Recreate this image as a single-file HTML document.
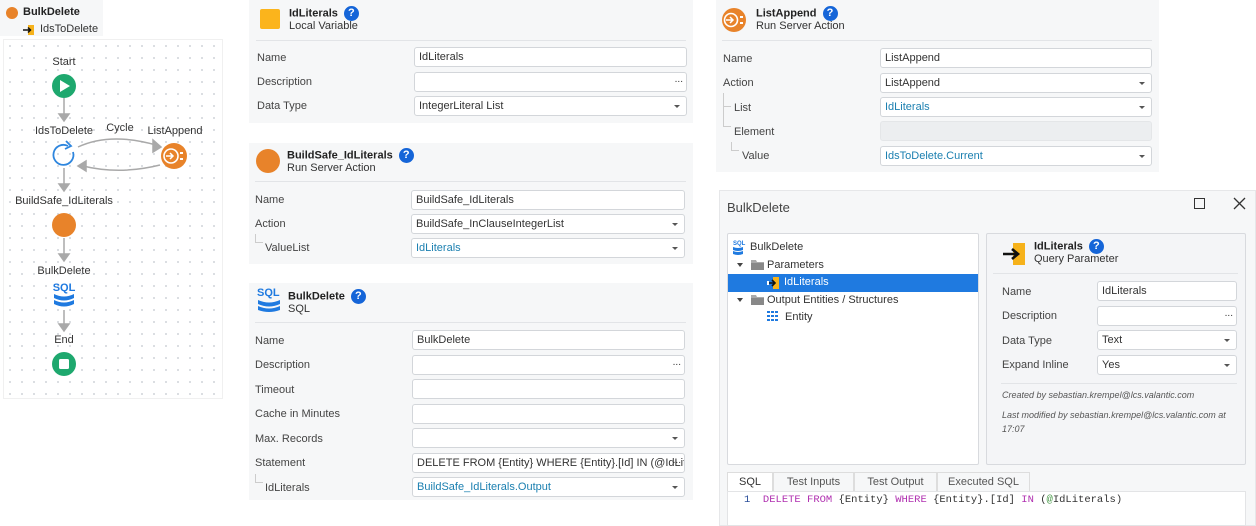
<!DOCTYPE html>
<html><head><meta charset="utf-8"><style>
*{box-sizing:border-box;margin:0;padding:0}
body{width:1256px;height:526px;background:#fff;font-family:"Liberation Sans",sans-serif;font-size:11px;color:#333;position:relative;overflow:hidden}
.a{position:absolute}
.p{position:absolute;background:#f6f7f8}
.t{font-weight:bold;color:#222;font-size:11px}
.s{color:#333;font-size:11px}
.q{display:inline-block;width:15px;height:15px;border-radius:50%;background:#1565d8;color:#fff;font-weight:bold;font-size:11px;text-align:center;line-height:15px;vertical-align:middle;margin-left:6px}
.sep{position:absolute;height:1px;background:#e2e4e7}
.l{position:absolute;color:#444;font-size:11px;margin-top:1px}
.i{position:absolute;height:20px;background:#fff;border:1px solid #d3d6da;border-radius:3px;padding:0 4px;line-height:18px;font-size:11px;color:#333;white-space:nowrap;overflow:hidden}
.i.b{color:#1a7fb0}
.i.dd::after{content:"";position:absolute;right:6px;top:8px;border:3px solid transparent;border-top:3px solid #555}
.i.el::after{content:"...";position:absolute;right:3px;top:-2px;font-size:10px;color:#333}
.tr{position:absolute;border-left:1px solid #ccc;border-bottom:1px solid #ccc;width:8px;height:9px}
.cv{background-color:#fff;background-image:radial-gradient(#cfd3d8 0.8px,transparent 1px);background-size:12px 12px}
.fl{position:absolute;font-size:11px;color:#333;text-align:center;width:140px}
.mono{font-family:"Liberation Mono",monospace;font-size:10.5px}
</style></head><body>

<div class="a" style="left:0;top:0;width:103px;height:36px;background:#f6f7f8"></div>
<div class="a" style="left:6px;top:7px;width:12px;height:12px;border-radius:50%;background:#e8832a"></div>
<div class="a t" style="left:23px;top:6px">BulkDelete</div>
<div class="a" style="left:23px;top:24px;width:11px;height:11px"><svg width="12" height="12"><rect x="5" y="1" width="6" height="10" fill="#f6b21b"/><path d="M0 6H7M5 3.5L7.5 6L5 8.5" stroke="#111" stroke-width="1.5" fill="none"/></svg></div>
<div class="a s" style="left:40px;top:23px">IdsToDelete</div>
<div class="a cv" style="left:3px;top:39px;width:220px;height:360px;border:1px solid #f0f0f0"></div>
<svg class="a" style="left:0;top:0" width="230" height="400">
<g stroke="#a9a9a9" stroke-width="1.5" fill="#a9a9a9">
<line x1="64" y1="98" x2="64" y2="115"/><path d="M59 114L64 121L69 114Z"/>
<line x1="64" y1="168" x2="64" y2="185"/><path d="M59 184L64 191L69 184Z"/>
<line x1="64" y1="238" x2="64" y2="255"/><path d="M59 254L64 261L69 254Z"/>
<line x1="64" y1="310" x2="64" y2="325"/><path d="M59 324L64 331L69 324Z"/>
<path d="M78 147Q110 132 156 145" fill="none"/><path d="M153 140L161 147L153 152Z"/>
<path d="M160 165Q120 175 83 166" fill="none"/><path d="M86 161L78 166L86 171Z"/>
</g>
<circle cx="64" cy="86" r="12" fill="#1ea86e"/><path d="M60 80L70 86L60 92Z" fill="#fff"/>
<path d="M73 152A10 10 0 1 1 68 146" stroke="#2e86de" stroke-width="1.8" fill="none"/><path d="M66 141L71 146L65 149" stroke="#2e86de" stroke-width="1.8" fill="none"/>
<circle cx="174" cy="156" r="13" fill="#e8832a"/><circle cx="171" cy="156" r="7" stroke="#fff" stroke-width="1.6" fill="none"/><path d="M166 156H173M170 153L173 156L170 159" stroke="#fff" stroke-width="1.5" fill="none"/><rect x="180" y="152" width="3" height="2" fill="#fff"/><rect x="180" y="158" width="3" height="2" fill="#fff"/>
<circle cx="64" cy="225" r="12" fill="#e8832a"/>
<text x="64" y="291" font-family="Liberation Sans" font-size="11" font-weight="bold" fill="#1f7ae0" text-anchor="middle">SQL</text>
<path d="M54 294Q64 299 74 294V298Q64 303 54 298Z M54 300Q64 305 74 300V304Q64 309 54 304Z" fill="#1f7ae0"/>
<circle cx="64" cy="364" r="12" fill="#1ea86e"/><rect x="59" y="359" width="10" height="10" rx="1.5" fill="#fff"/>
</svg>
<div class="fl" style="left:-6px;top:56px">Start</div>
<div class="fl" style="left:-6px;top:125px">IdsToDelete</div>
<div class="fl" style="left:50px;top:122px">Cycle</div>
<div class="fl" style="left:105px;top:125px">ListAppend</div>
<div class="fl" style="left:-6px;top:195px">BuildSafe_IdLiterals</div>
<div class="fl" style="left:-6px;top:265px">BulkDelete</div>
<div class="fl" style="left:-6px;top:334px">End</div>

<div class="p" style="left:249px;top:0;width:444px;height:123px"></div>
<div class="a" style="left:260px;top:9px;width:20px;height:20px;background:#fbb41c;border-radius:2px"></div>
<div class="a t" style="left:289px;top:6px">IdLiterals<span class="q">?</span></div>
<div class="a s" style="left:289px;top:20px">Local Variable</div>
<div class="sep" style="left:256px;top:40px;width:430px"></div>
<div class="l" style="left:257px;top:51px">Name</div><div class="i" style="left:414px;top:47px;width:273px">IdLiterals</div>
<div class="l" style="left:257px;top:75px">Description</div><div class="i el" style="left:414px;top:72px;width:273px"></div>
<div class="l" style="left:257px;top:99px">Data Type</div><div class="i dd" style="left:414px;top:96px;width:273px">IntegerLiteral List</div>

<div class="p" style="left:249px;top:143px;width:444px;height:121px"></div>
<div class="a" style="left:256px;top:149px;width:24px;height:24px;border-radius:50%;background:#e8832a"></div>
<div class="a t" style="left:287px;top:148px">BuildSafe_IdLiterals<span class="q">?</span></div>
<div class="a s" style="left:287px;top:162px">Run Server Action</div>
<div class="sep" style="left:255px;top:181px;width:431px"></div>
<div class="l" style="left:255px;top:193px">Name</div><div class="i" style="left:411px;top:190px;width:274px">BuildSafe_IdLiterals</div>
<div class="l" style="left:255px;top:217px">Action</div><div class="i dd" style="left:411px;top:214px;width:274px">BuildSafe_InClauseIntegerList</div>
<div class="tr" style="left:255px;top:234px"></div>
<div class="l" style="left:265px;top:241px">ValueList</div><div class="i dd b" style="left:411px;top:238px;width:274px">IdLiterals</div>

<div class="p" style="left:249px;top:283px;width:444px;height:217px"></div>
<div class="a" style="left:257px;top:287px;font-weight:bold;color:#1f7ae0;font-size:11px">SQL</div>
<svg class="a" style="left:257px;top:300px" width="24" height="12"><path d="M1 0Q12 5 23 0V4Q12 9 1 4Z M1 6Q12 11 23 6V10Q12 14 1 10Z" fill="#1f7ae0"/></svg>
<div class="a t" style="left:288px;top:289px">BulkDelete<span class="q">?</span></div>
<div class="a s" style="left:288px;top:303px">SQL</div>
<div class="sep" style="left:255px;top:322px;width:431px"></div>
<div class="l" style="left:255px;top:334px">Name</div><div class="i" style="left:412px;top:330px;width:273px">BulkDelete</div>
<div class="l" style="left:255px;top:358px">Description</div><div class="i el" style="left:412px;top:355px;width:273px"></div>
<div class="l" style="left:255px;top:383px">Timeout</div><div class="i" style="left:412px;top:379px;width:273px"></div>
<div class="l" style="left:255px;top:407px">Cache in Minutes</div><div class="i" style="left:412px;top:404px;width:273px"></div>
<div class="l" style="left:255px;top:432px">Max. Records</div><div class="i dd" style="left:412px;top:428px;width:273px"></div>
<div class="l" style="left:255px;top:456px">Statement</div><div class="i el" style="left:412px;top:453px;width:273px;padding-right:20px">DELETE FROM {Entity} WHERE {Entity}.[Id] IN (@IdLit</div>
<div class="tr" style="left:255px;top:474px"></div>
<div class="l" style="left:265px;top:481px">IdLiterals</div><div class="i dd b" style="left:412px;top:477px;width:273px">BuildSafe_IdLiterals.Output</div>

<div class="p" style="left:716px;top:0;width:443px;height:172px"></div>
<svg class="a" style="left:722px;top:8px" width="26" height="26"><circle cx="12" cy="12" r="12" fill="#e8832a"/><circle cx="9" cy="12" r="6.5" stroke="#fff" stroke-width="1.6" fill="none"/><path d="M4 12H11M8 9L11 12L8 15" stroke="#fff" stroke-width="1.5" fill="none"/><rect x="18" y="8" width="3" height="2" fill="#fff"/><rect x="18" y="14" width="3" height="2" fill="#fff"/></svg>
<div class="a t" style="left:756px;top:6px">ListAppend<span class="q">?</span></div>
<div class="a s" style="left:756px;top:20px">Run Server Action</div>
<div class="sep" style="left:722px;top:40px;width:430px"></div>
<div class="l" style="left:723px;top:52px">Name</div><div class="i" style="left:880px;top:48px;width:272px">ListAppend</div>
<div class="l" style="left:723px;top:76px">Action</div><div class="i dd" style="left:880px;top:73px;width:272px">ListAppend</div>
<div class="a" style="left:723px;top:93px;width:1px;height:25px;background:#ccc"></div>
<div class="a" style="left:723px;top:106px;width:8px;height:1px;background:#ccc"></div>
<div class="l" style="left:734px;top:101px">List</div><div class="i dd b" style="left:880px;top:97px;width:272px">IdLiterals</div>
<div class="tr" style="left:723px;top:118px"></div>
<div class="l" style="left:734px;top:125px">Element</div><div class="i" style="left:880px;top:121px;width:272px;background:#eceef0;border-color:#e4e6e8"></div>
<div class="tr" style="left:731px;top:142px"></div>
<div class="l" style="left:742px;top:149px">Value</div><div class="i dd b" style="left:880px;top:146px;width:272px">IdsToDelete.Current</div>

<div class="a" style="left:719px;top:190px;width:537px;height:336px;background:#f6f7f8;border:1px solid #e6e7e9"></div>
<div class="a" style="left:727px;top:200px;font-size:13px;color:#444">BulkDelete</div>
<div class="a" style="left:1194px;top:198px;width:11px;height:11px;border:1.3px solid #333"></div>
<svg class="a" style="left:1233px;top:197px" width="13" height="13"><path d="M1 1L12 12M12 1L1 12" stroke="#333" stroke-width="1.3"/></svg>
<div class="a" style="left:727px;top:233px;width:252px;height:232px;background:#fff;border:1px solid #d8dade;border-radius:2px"></div>
<div class="a" style="left:733px;top:241px;font-size:6px;color:#1f7ae0;font-weight:bold">SQL</div>
<svg class="a" style="left:733px;top:247px" width="10" height="8"><path d="M0 0Q5 2 10 0V3Q5 5 0 3Z M0 4Q5 6 10 4V7Q5 9 0 7Z" fill="#1f7ae0"/></svg>
<div class="a" style="left:750px;top:241px;color:#333">BulkDelete</div>
<div class="a" style="left:737px;top:263px;border:3px solid transparent;border-top:4px solid #444"></div>
<svg class="a" style="left:751px;top:259px" width="14" height="12"><path d="M0 1H5L6 3H13V11H0Z" fill="#aaa"/><path d="M0 4H13V11H0Z" fill="#888"/></svg>
<div class="a" style="left:767px;top:259px">Parameters</div>
<div class="a" style="left:728px;top:274px;width:250px;height:18px;background:#1f7ae0"></div>
<svg class="a" style="left:766px;top:276px" width="14" height="14"><rect x="7" y="1" width="6" height="12" fill="#f6b21b"/><path d="M1 7H9M6 4L9 7L6 10" stroke="#111" stroke-width="1.6" fill="none"/><rect x="1" y="5" width="2" height="4" fill="#fff"/></svg>
<div class="a" style="left:784px;top:276px;color:#fff">IdLiterals</div>
<div class="a" style="left:737px;top:298px;border:3px solid transparent;border-top:4px solid #444"></div>
<svg class="a" style="left:751px;top:294px" width="14" height="12"><path d="M0 1H5L6 3H13V11H0Z" fill="#aaa"/><path d="M0 4H13V11H0Z" fill="#888"/></svg>
<div class="a" style="left:767px;top:294px">Output Entities / Structures</div>
<svg class="a" style="left:767px;top:311px" width="12" height="10"><g fill="#1f7ae0"><rect x="0" y="0" width="3" height="2"/><rect x="4" y="0" width="3" height="2"/><rect x="8" y="0" width="3" height="2"/><rect x="0" y="4" width="3" height="2"/><rect x="4" y="4" width="3" height="2"/><rect x="8" y="4" width="3" height="2"/><rect x="0" y="8" width="3" height="2"/><rect x="4" y="8" width="3" height="2"/><rect x="8" y="8" width="3" height="2"/></g></svg>
<div class="a" style="left:785px;top:311px">Entity</div>

<div class="a" style="left:986px;top:233px;width:260px;height:232px;background:#f4f5f7;border:1px solid #d8dade;border-radius:2px"></div>
<svg class="a" style="left:1002px;top:242px" width="26" height="24"><rect x="11" y="1" width="12" height="22" fill="#f6b21b"/><path d="M1 12H15M10 7L16 12L10 17" stroke="#111" stroke-width="2.6" fill="none"/></svg>
<div class="a t" style="left:1034px;top:239px">IdLiterals<span class="q">?</span></div>
<div class="a s" style="left:1034px;top:253px">Query Parameter</div>
<div class="sep" style="left:993px;top:273px;width:245px"></div>
<div class="l" style="left:1002px;top:285px">Name</div><div class="i" style="left:1097px;top:281px;width:140px">IdLiterals</div>
<div class="l" style="left:1002px;top:309px">Description</div><div class="i el" style="left:1097px;top:306px;width:140px"></div>
<div class="l" style="left:1002px;top:334px">Data Type</div><div class="i dd" style="left:1097px;top:330px;width:140px">Text</div>
<div class="l" style="left:1002px;top:358px">Expand Inline</div><div class="i dd" style="left:1097px;top:355px;width:140px">Yes</div>
<div class="sep" style="left:1001px;top:383px;width:236px"></div>
<div class="a" style="left:1002px;top:390px;font-size:9px;font-style:italic;color:#555">Created by sebastian.krempel@lcs.valantic.com</div>
<div class="a" style="left:1002px;top:408px;font-size:9px;font-style:italic;color:#555;width:230px;line-height:14px">Last modified by sebastian.krempel@lcs.valantic.com at 17:07</div>

<div class="a" style="left:727px;top:472px;width:46px;height:19px;background:#fff;border:1px solid #ddd;border-bottom:none;text-align:center;line-height:18px;color:#333">SQL</div>
<div class="a" style="left:773px;top:472px;width:81px;height:19px;border:1px solid #ddd;border-bottom:none;text-align:center;line-height:18px;color:#555">Test Inputs</div>
<div class="a" style="left:854px;top:472px;width:83px;height:19px;border:1px solid #ddd;border-bottom:none;text-align:center;line-height:18px;color:#555">Test Output</div>
<div class="a" style="left:937px;top:472px;width:93px;height:19px;border:1px solid #ddd;border-bottom:none;text-align:center;line-height:18px;color:#555">Executed SQL</div>
<div class="a" style="left:727px;top:491px;width:519px;height:35px;background:#fff;border:1px solid #e3e4e6"></div>
<div class="a mono" style="left:744px;top:494px;color:#333"><span style="color:#2a4e9a">1</span>&nbsp;&nbsp;<span style="color:#b030b0">DELETE FROM</span> {Entity} <span style="color:#b030b0">WHERE</span> {Entity}.[Id] <span style="color:#b030b0">IN</span> (<span style="color:#4a9a4a">@</span>IdLiterals)</div>
</body></html>
